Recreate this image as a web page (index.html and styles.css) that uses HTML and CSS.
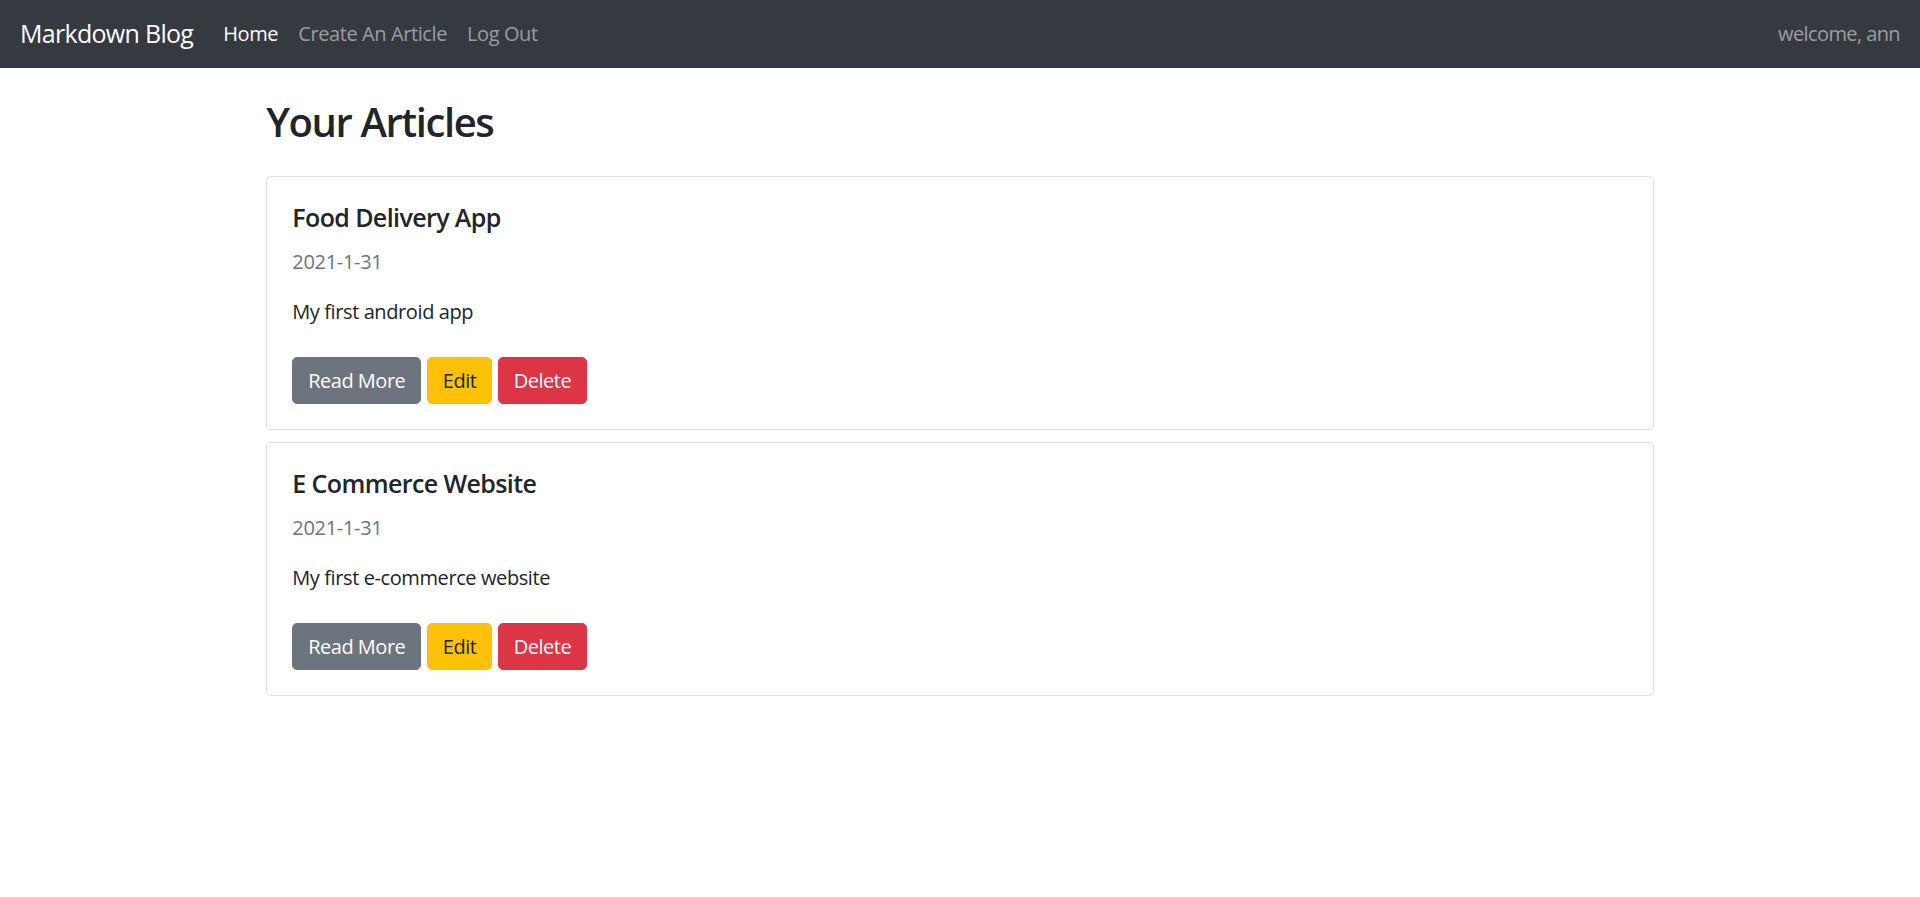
FILE: index.html
```html
<!DOCTYPE html>
<html>

<head>
  <title>Markdown Blog</title>
  <link rel="stylesheet" href="styles.css">
</head>

<body>
  <nav class="navbar">
    <a href="#" class="brand">Markdown Blog</a>
    <ul class="nav-links">
      <li><a href="#" class="nav-link active">Home</a></li>
      <li><a href="#" class="nav-link">Create An Article</a></li>
      <li><a href="#" class="nav-link">Log Out</a></li>
    </ul>
    <span class="welcome">welcome, ann</span>
  </nav>

  <main class="container">
    <h1 class="page-title">Your Articles</h1>

    <div class="card">
      <h5 class="card-title">Food Delivery App</h5>
      <p class="card-date">2021-1-31</p>
      <p class="card-text">My first android app</p>
      <div class="card-actions">
        <a href="#" class="btn btn-secondary">Read More</a>
        <a href="#" class="btn btn-warning">Edit</a>
        <button class="btn btn-danger">Delete</button>
      </div>
    </div>

    <div class="card">
      <h5 class="card-title">E Commerce Website</h5>
      <p class="card-date">2021-1-31</p>
      <p class="card-text">My first e-commerce website</p>
      <div class="card-actions">
        <a href="#" class="btn btn-secondary">Read More</a>
        <a href="#" class="btn btn-warning">Edit</a>
        <button class="btn btn-danger">Delete</button>
      </div>
    </div>
  </main>
</body>

</html>
```

FILE: styles.css
```css
    html,
    body {
      margin: 0;
      padding: 0;
    }

    body {
      font-family: "Open Sans", "Noto Sans", Arial, sans-serif;
      font-size: 20px;
      line-height: 1.5;
      color: #212529;
      background-color: #fff;
    }

    a {
      text-decoration: none;
    }

    /* Top bar */
    .navbar {
      display: flex;
      align-items: center;
      height: 68px;
      padding: 0 20px;
      box-sizing: border-box;
      background-color: #343a40;
    }

    .brand {
      font-size: 25px;
      color: #fff;
      margin-right: 20px;
      letter-spacing: -0.7px;
    }

    .nav-links {
      list-style: none;
      display: flex;
      margin: 0;
      padding: 0;
      flex-grow: 1;
    }

    .nav-link {
      display: block;
      padding: 10px;
      color: rgba(255, 255, 255, 0.5);
      letter-spacing: -0.4px;
    }

    .nav-link.active {
      color: #fff;
    }

    .welcome {
      color: rgba(255, 255, 255, 0.5);
      letter-spacing: -0.6px;
    }

    /* Content */
    .container {
      max-width: 1425px;
      margin: 0 auto;
      padding: 0 18.75px;
      box-sizing: border-box;
    }

    .page-title {
      font-size: 40px;
      font-weight: 600;
      line-height: 1.2;
      margin: 30px 0 30px;
      letter-spacing: -1.4px;
    }

    .card {
      border: 1px solid rgba(0, 0, 0, 0.125);
      border-radius: 5px;
      padding: 25px;
      margin-bottom: 12px;
    }

    .card-title {
      font-size: 25px;
      font-weight: 600;
      line-height: 1.2;
      margin: 0 0 15px;
      letter-spacing: -0.6px;
    }

    .card-date {
      color: #6c757d;
      margin: 2px 0 20px;
      letter-spacing: -0.3px;
    }

    .card-text {
      margin: 0 0 30px;
      letter-spacing: -0.4px;
    }

    .card-actions {
      display: flex;
      gap: 5.5px;
    }

    /* Buttons */
    .btn {
      display: inline-block;
      font-family: inherit;
      font-size: 20px;
      line-height: 1.5;
      padding: 7.5px 15px;
      border: 1px solid transparent;
      border-radius: 5px;
      cursor: pointer;
      letter-spacing: -0.5px;
    }

    .btn-secondary {
      background-color: #6c757d;
      border-color: #6c757d;
      color: #fff;
    }

    .btn-warning {
      background-color: #ffc107;
      border-color: #ffc107;
      color: #212529;
    }

    .btn-danger {
      background-color: #dc3545;
      border-color: #dc3545;
      color: #fff;
    }
```
